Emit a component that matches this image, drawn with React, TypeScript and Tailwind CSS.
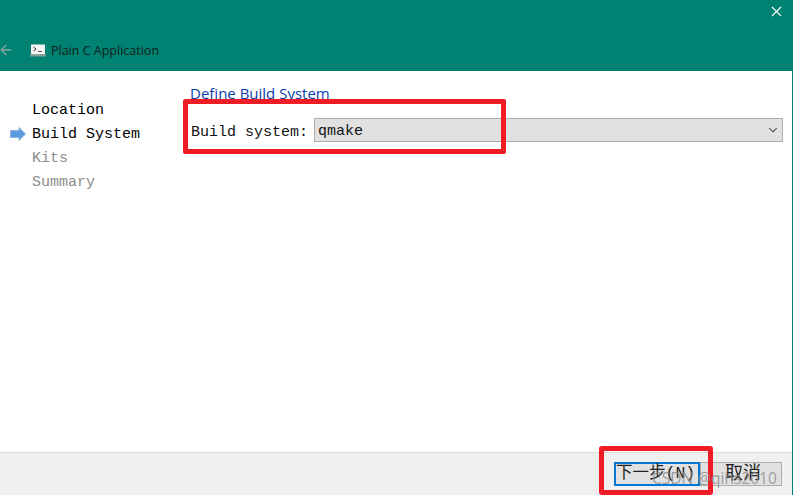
import { ArrowLeft, ChevronDown, X } from "lucide-react";

const sans = "font-['Open_Sans','Noto_Sans',sans-serif]";
const mono = "font-['Liberation_Mono','DejaVu_Sans_Mono','Noto_Sans_CJK_SC',monospace]";

export default function App() {
  return (
    <div className="relative flex h-[495px] w-[793px] flex-col overflow-hidden border-r border-[#008272] bg-white">
      {/* TITLE BAR */}
      <div className="relative flex h-[71px] shrink-0 items-end bg-[#008272] pb-[10px]">
        <ArrowLeft size={16} strokeWidth={2} className="ml-[-2px] mb-[3px] text-[#86a5a0]" />
        <svg width="16" height="13" viewBox="0 0 16 13" className="ml-[16px] mb-[4px]">
          <rect x="1" y="0.5" width="14" height="10" fill="#f4f4f4" />
          <rect x="0" y="10.5" width="16" height="2" fill="#8a9a98" />
          <path d="M3.5 3 L6 5 L3.5 7" fill="none" stroke="#333" strokeWidth="1" />
          <rect x="8" y="7" width="4" height="1" fill="#555" />
        </svg>
        <span className={`ml-[5px] text-[12.5px] leading-[21px] text-[#0d1f1d] ${sans}`}>Plain C Application</span>
        <X size={17} strokeWidth={1.5} className="absolute right-[7px] top-[3px] text-white" />
      </div>

      {/* BODY */}
      <div className="flex flex-1">
        <div className={`w-[190px] shrink-0 pl-[32px] pt-[28px] text-[15px] leading-[24px] ${mono}`}>
          <div className="text-black">Location</div>
          <div className="relative text-black">
            <svg width="16" height="14" viewBox="0 0 16 14" className="absolute left-[-22px] top-[4px]">
              <path d="M0.5 3.5 H9 V0.5 L15.5 7 L9 13.5 V10.5 H0.5 Z" fill="#5b9be0" stroke="#8fb4dc" />
            </svg>
            Build System
          </div>
          <div className="text-[#8c8c8c]">Kits</div>
          <div className="text-[#8c8c8c]">Summary</div>
        </div>
        <div className="flex-1 pr-[9px] pt-[12px]">
          <div className={`text-[15px] leading-[20px] text-[#0a3cb0] ${sans}`}>Define Build System</div>
          <div className="mt-[15px] flex h-[24px] items-start">
            <span className={`ml-[1px] h-[24px] w-[123px] shrink-0 whitespace-nowrap pt-[3px] text-[15px] leading-[24px] text-[#111] ${mono}`}>Build system:</span>
            <div className={`flex h-[24px] flex-1 items-center justify-between border-[1.5px] border-[#adadad] bg-[#e1e1e1] pl-[3px] pr-[2px] text-[15px] text-[#111] ${mono}`}>
              <span className="pt-[5px]">qmake</span>
              <ChevronDown size={14} strokeWidth={1.75} className="text-[#333]" />
            </div>
          </div>
        </div>
      </div>

      {/* FOOTER */}
      <div className="flex h-[43px] shrink-0 items-start justify-end border-t border-[#dcdcdc] bg-[#f0f0f0] pr-[10px] pt-[9px]">
        <button className={`h-[24px] w-[86px] whitespace-nowrap border-2 border-[#0078d7] bg-[#e1e1e1] pr-[3px] text-[16.5px] leading-[18px] text-[#222] ${mono}`}>
          下一步(N)
        </button>
        <button className={`h-[24px] w-[82px] border border-[#adadad] bg-[#e1e1e1] pl-[4px] text-[18px] leading-[20px] text-[#222] ${mono}`}>
          取消
        </button>
      </div>

      {/* ANNOTATIONS */}
      <div className="absolute left-[183px] top-[99px] h-[55px] w-[323px] rounded-[2px] border-[5px] border-[#ee1c25]" />
      <div className="absolute left-[599px] top-[446px] h-[49px] w-[114px] rounded-[3px] border-[5px] border-[#ee1c25]" />
      <div className={`absolute left-[652px] top-[468px] text-[15.5px] leading-[20px] text-[#8a8a8a]/80 ${sans}`}>CSDN @qihs2010</div>
    </div>
  );
}
